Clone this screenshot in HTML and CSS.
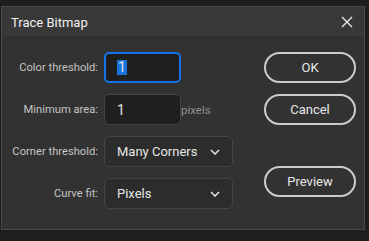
FILE: index.html
```html
<!DOCTYPE html>
<html lang="en">
<head>
    <meta charset="UTF-8">
    <title>Trace Bitmap</title>
    <link rel="stylesheet" href="styles.css">
</head>
<body>
    <div class="dialog">
        <div class="title-bar">
            <span class="title">Trace Bitmap</span>
            <svg class="close" width="12" height="12" viewBox="0 0 12 12">
                <path d="M1 1 L11 11 M11 1 L1 11" stroke="#e8e8e8" stroke-width="1.4" fill="none"/>
            </svg>
        </div>
        <div class="dialog-body">
            <div class="form">
                <label class="field-label">Color threshold:</label>
                <div class="text-input focused"><span class="selected">1</span></div>
                <span></span>

                <label class="field-label">Minimum area:</label>
                <div class="text-input"><span>1</span></div>
                <span class="unit">pixels</span>

                <label class="field-label">Corner threshold:</label>
                <div class="select">
                    <span>Many Corners</span>
                    <svg width="10" height="6" viewBox="0 0 10 6"><path d="M1 1 L5 5 L9 1" stroke="#e0e0e0" stroke-width="1.6" fill="none"/></svg>
                </div>

                <label class="field-label">Curve fit:</label>
                <div class="select">
                    <span>Pixels</span>
                    <svg width="10" height="6" viewBox="0 0 10 6"><path d="M1 1 L5 5 L9 1" stroke="#e0e0e0" stroke-width="1.6" fill="none"/></svg>
                </div>
            </div>
            <div class="buttons">
                <button class="pill">OK</button>
                <button class="pill">Cancel</button>
                <button class="pill preview">Preview</button>
            </div>
        </div>
    </div>
</body>
</html>
```

FILE: styles.css
```css
:root {
    --bg-outer: #1e1e1e;
    --bg-dialog: #323232;
    --bg-title: #383838;
    --bg-field: #1f1f1f;
    --border-dialog: #4a4a4a;
    --border-field: #444444;
    --text-label: #c4c4c4;
    --text-value: #e6e6e6;
    --accent: #1473e6;
}

body {
    margin: 0;
    background-color: var(--bg-outer);
    font-family: Roboto, "Noto Sans", sans-serif;
}

.dialog {
    margin: 6px 0 0 1px;
    width: 362px;
    height: 222px;
    background-color: var(--bg-dialog);
    border: 1px solid var(--border-dialog);
}

/* --- Barra de titulo --- */
.title-bar {
    height: 30px;
    display: flex;
    align-items: center;
    justify-content: space-between;
    padding: 0 10px 0 9px;
    background-color: var(--bg-title);
    border-bottom: 1px solid #2e2e2e;
}

.title {
    color: #f2f2f2;
    font-size: 13px;
}

.close {
    margin-right: 1px;
}

/* --- Corpo --- */
.dialog-body {
    display: flex;
    padding-top: 14px;
}

.form {
    display: grid;
    grid-template-columns: 96px 77px 52px;
    grid-auto-rows: 31px;
    row-gap: 11px;
    column-gap: 6px;
    align-items: center;
    width: 237px;
}

.form > .field-label {
    justify-self: end;
    white-space: nowrap;
    color: var(--text-label);
    font-size: 11.2px;
}

.text-input {
    height: 31px;
    box-sizing: border-box;
    background-color: var(--bg-field);
    border: 1px solid var(--border-field);
    border-radius: 5px;
    display: flex;
    align-items: center;
    padding-left: 12px;
    color: var(--text-value);
    font-size: 14px;
}

.text-input.focused {
    border: 2px solid var(--accent);
    padding-left: 11px;
}

.selected {
    background-color: #1a73d9;
    padding: 0 1px;
    line-height: 15px;
}

.unit {
    margin-left: -6px;
    color: #8f8f8f;
    font-size: 11.5px;
}

.select {
    grid-column: 2 / 4;
    width: 129px;
    height: 31px;
    box-sizing: border-box;
    background-color: #2c2c2c;
    border: 1px solid var(--border-field);
    border-radius: 5px;
    display: flex;
    align-items: center;
    justify-content: space-between;
    padding: 0 12px 0 12px;
    color: var(--text-value);
    font-size: 13px;
}

/* --- Botoes --- */
.buttons {
    display: flex;
    flex-direction: column;
    gap: 11px;
    margin-left: 25px;
}

.pill {
    width: 92px;
    height: 31px;
    background: transparent;
    border: 2px solid #cccccc;
    border-radius: 16px;
    color: #e8e8e8;
    font-family: Roboto, "Noto Sans", sans-serif;
    font-size: 13px;
    padding: 0;
}

.preview {
    margin-top: 30px;
}
```
